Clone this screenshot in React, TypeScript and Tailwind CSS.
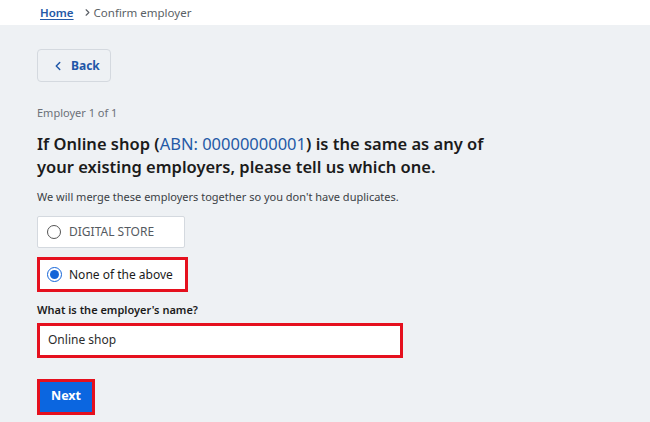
import { ChevronLeft, ChevronRight } from "lucide-react";

const App = () => {
  return (
    <div className="min-h-[422px] bg-[#eef1f4] text-[#1b1b1b]" style={{ fontFamily: '"Noto Sans", "Open Sans", sans-serif' }}>
      {/* breadcrumb */}
      <div className="flex h-[25px] items-center gap-[8px] bg-white pl-[40px] text-[11.5px]">
        <a href="#" className="font-semibold text-[#2459a6] underline underline-offset-2">Home</a>
        <span className="flex items-center gap-[1px] text-[#5a5f66]">
          <ChevronRight className="h-[11px] w-[11px]" strokeWidth={2.5} />
          Confirm employer
        </span>
      </div>

      <div className="px-[37px] pt-[24px]">
        <button className="flex h-[33px] w-[74px] items-center gap-[6px] rounded-[4px] border-[1.5px] border-[#d4d9df] pl-[13px] text-[12px] font-bold text-[#1f57a8]">
          <ChevronLeft className="h-[14px] w-[14px]" strokeWidth={2.5} />
          Back
        </button>

        <p className="mt-[23px] text-[11px] text-[#6b7078]">Employer 1 of 1</p>

        <h1 className="mt-[10px] w-[470px] text-[16.5px] font-semibold leading-[23px] text-[#1b1b1b]">
          If Online shop (<span className="font-normal text-[#2459a6]">ABN: 00000000001</span>) is the same as any of
          your existing employers, please tell us which one.
        </h1>

        <p className="mt-[11px] text-[11px] text-[#3b3f45]">We will merge these employers together so you don't have duplicates.</p>

        <label className="mt-[11px] flex h-[32px] w-[148px] items-center gap-[8px] rounded-[2px] border-[1.5px] border-[#d4d9df] bg-white pl-[9px] text-[12px] text-[#555a61]">
          <span className="h-[14px] w-[14px] rounded-full border-[1.5px] border-[#545454]" />
          DIGITAL STORE
        </label>

        <label className="mt-[9px] flex h-[35px] w-[151px] items-center gap-[7px] border-[3px] border-[#e5101e] bg-white pl-[7px] text-[12px] text-[#1b1b1b]">
          <span className="flex h-[15px] w-[15px] items-center justify-center rounded-full border-[1.5px] border-[#1565d8]">
            <span className="h-[9px] w-[9px] rounded-full bg-[#1565d8]" />
          </span>
          None of the above
        </label>

        <p className="mt-[10px] text-[11px] font-semibold text-[#1b1b1b]">What is the employer's name?</p>

        <div className="mt-[4px] flex h-[35px] w-[366px] items-center border-[3px] border-[#e5101e] bg-white pl-[8px] text-[12px] text-[#2b2b2b]">
          Online shop
        </div>

        <div className="mt-[21px] flex w-fit border-[3px] border-[#e5101e]">
          <button className="flex h-[30px] w-[52px] items-center justify-center bg-[#0b66e0] text-[12.5px] font-bold text-white">
            Next
          </button>
        </div>
      </div>
    </div>
  );
};

export default App;
